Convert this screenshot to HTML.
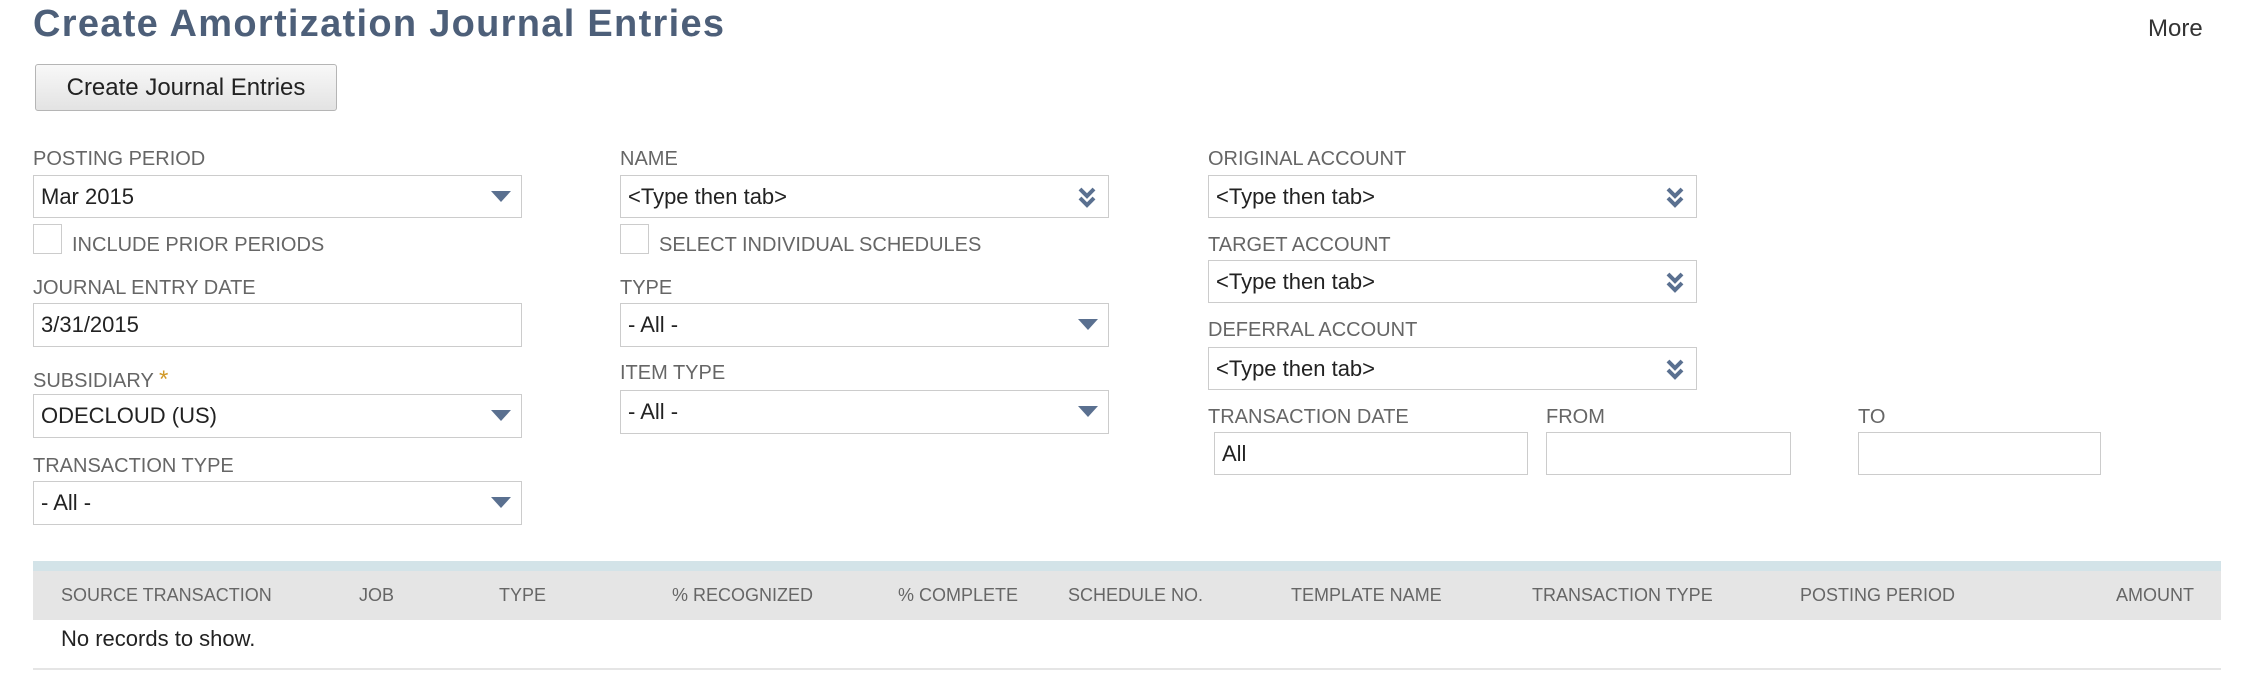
<!DOCTYPE html>
<html><head><meta charset="utf-8"><style>
*{margin:0;padding:0;box-sizing:border-box}
body{width:2254px;height:677px;background:#fff;font-family:"Liberation Sans",sans-serif;position:relative;overflow:hidden;color:#222}
.a{position:absolute}
.t{left:33px;top:3px;font-size:38px;font-weight:bold;color:#4d5f79;letter-spacing:1.3px}
.more{left:2148px;top:15px;font-size:24px;color:#333}
.btn{left:35px;top:64px;width:302px;height:47px;border:1px solid #b5b5b5;border-radius:3px;background:linear-gradient(#f8f8f8,#e3e3e3);font-size:24px;color:#222;text-align:center;line-height:45px}
.l{font-size:20px;color:#666;white-space:nowrap}
.f{border:1px solid #ccc;background:#fff;font-size:22px;color:#222;padding-left:7px;display:flex;align-items:center}
.cb{width:29px;height:30px;border:1px solid #ccc;background:#fff}
.tri{position:absolute;right:10px;top:15px;width:0;height:0;border-left:10px solid transparent;border-right:10px solid transparent;border-top:11px solid #5a7090}
.dbl{position:absolute;right:12px;top:11px}
.th{font-size:18px;color:#666;top:585px;white-space:nowrap}
</style></head><body>
<div class="a t">Create Amortization Journal Entries</div>
<div class="a more">More</div>
<div class="a btn">Create Journal Entries</div>

<div class="a l" style="left:33px;top:148px">POSTING PERIOD</div>
<div class="a f" style="left:33px;top:175px;width:489px;height:43px">Mar 2015<span class="tri"></span></div>
<div class="a cb" style="left:33px;top:224px"></div>
<div class="a l" style="left:72px;top:234px">INCLUDE PRIOR PERIODS</div>
<div class="a l" style="left:33px;top:277px">JOURNAL ENTRY DATE</div>
<div class="a f" style="left:33px;top:303px;width:489px;height:44px">3/31/2015</div>
<div class="a l" style="left:33px;top:366px">SUBSIDIARY <span style="color:#d19a2a;font-size:24px">*</span></div>
<div class="a f" style="left:33px;top:394px;width:489px;height:44px">ODECLOUD (US)<span class="tri"></span></div>
<div class="a l" style="left:33px;top:455px">TRANSACTION TYPE</div>
<div class="a f" style="left:33px;top:481px;width:489px;height:44px">- All -<span class="tri"></span></div>

<div class="a l" style="left:620px;top:148px">NAME</div>
<div class="a f" style="left:620px;top:175px;width:489px;height:43px">&lt;Type then tab&gt;<svg class="dbl" width="18" height="22" viewBox="0 0 18 22"><path d="M2 2l7 7 7-7M2 11l7 7 7-7" fill="none" stroke="#5a7090" stroke-width="4"/></svg></div>
<div class="a cb" style="left:620px;top:224px"></div>
<div class="a l" style="left:659px;top:234px">SELECT INDIVIDUAL SCHEDULES</div>
<div class="a l" style="left:620px;top:277px">TYPE</div>
<div class="a f" style="left:620px;top:303px;width:489px;height:44px">- All -<span class="tri"></span></div>
<div class="a l" style="left:620px;top:362px">ITEM TYPE</div>
<div class="a f" style="left:620px;top:390px;width:489px;height:44px">- All -<span class="tri"></span></div>

<div class="a l" style="left:1208px;top:148px">ORIGINAL ACCOUNT</div>
<div class="a f" style="left:1208px;top:175px;width:489px;height:43px">&lt;Type then tab&gt;<svg class="dbl" width="18" height="22" viewBox="0 0 18 22"><path d="M2 2l7 7 7-7M2 11l7 7 7-7" fill="none" stroke="#5a7090" stroke-width="4"/></svg></div>
<div class="a l" style="left:1208px;top:234px">TARGET ACCOUNT</div>
<div class="a f" style="left:1208px;top:260px;width:489px;height:43px">&lt;Type then tab&gt;<svg class="dbl" width="18" height="22" viewBox="0 0 18 22"><path d="M2 2l7 7 7-7M2 11l7 7 7-7" fill="none" stroke="#5a7090" stroke-width="4"/></svg></div>
<div class="a l" style="left:1208px;top:319px">DEFERRAL ACCOUNT</div>
<div class="a f" style="left:1208px;top:347px;width:489px;height:43px">&lt;Type then tab&gt;<svg class="dbl" width="18" height="22" viewBox="0 0 18 22"><path d="M2 2l7 7 7-7M2 11l7 7 7-7" fill="none" stroke="#5a7090" stroke-width="4"/></svg></div>
<div class="a l" style="left:1208px;top:406px">TRANSACTION DATE</div>
<div class="a l" style="left:1546px;top:406px">FROM</div>
<div class="a l" style="left:1858px;top:406px">TO</div>
<div class="a f" style="left:1214px;top:432px;width:314px;height:43px">All</div>
<div class="a f" style="left:1546px;top:432px;width:245px;height:43px"></div>
<div class="a f" style="left:1858px;top:432px;width:243px;height:43px"></div>

<div class="a" style="left:33px;top:561px;width:2188px;height:10px;background:#d3e3e8"></div>
<div class="a" style="left:33px;top:571px;width:2188px;height:49px;background:#e5e5e5"></div>
<div class="a" style="left:33px;top:620px;width:2188px;height:50px;border-bottom:2px solid #e5e5e5"></div>
<div class="a th" style="left:61px">SOURCE TRANSACTION</div>
<div class="a th" style="left:359px">JOB</div>
<div class="a th" style="left:499px">TYPE</div>
<div class="a th" style="left:672px">% RECOGNIZED</div>
<div class="a th" style="left:898px">% COMPLETE</div>
<div class="a th" style="left:1068px">SCHEDULE NO.</div>
<div class="a th" style="left:1291px">TEMPLATE NAME</div>
<div class="a th" style="left:1532px">TRANSACTION TYPE</div>
<div class="a th" style="left:1800px">POSTING PERIOD</div>
<div class="a th" style="right:60px">AMOUNT</div>
<div class="a" style="left:61px;top:626px;font-size:22px;color:#222">No records to show.</div>
</body></html>
